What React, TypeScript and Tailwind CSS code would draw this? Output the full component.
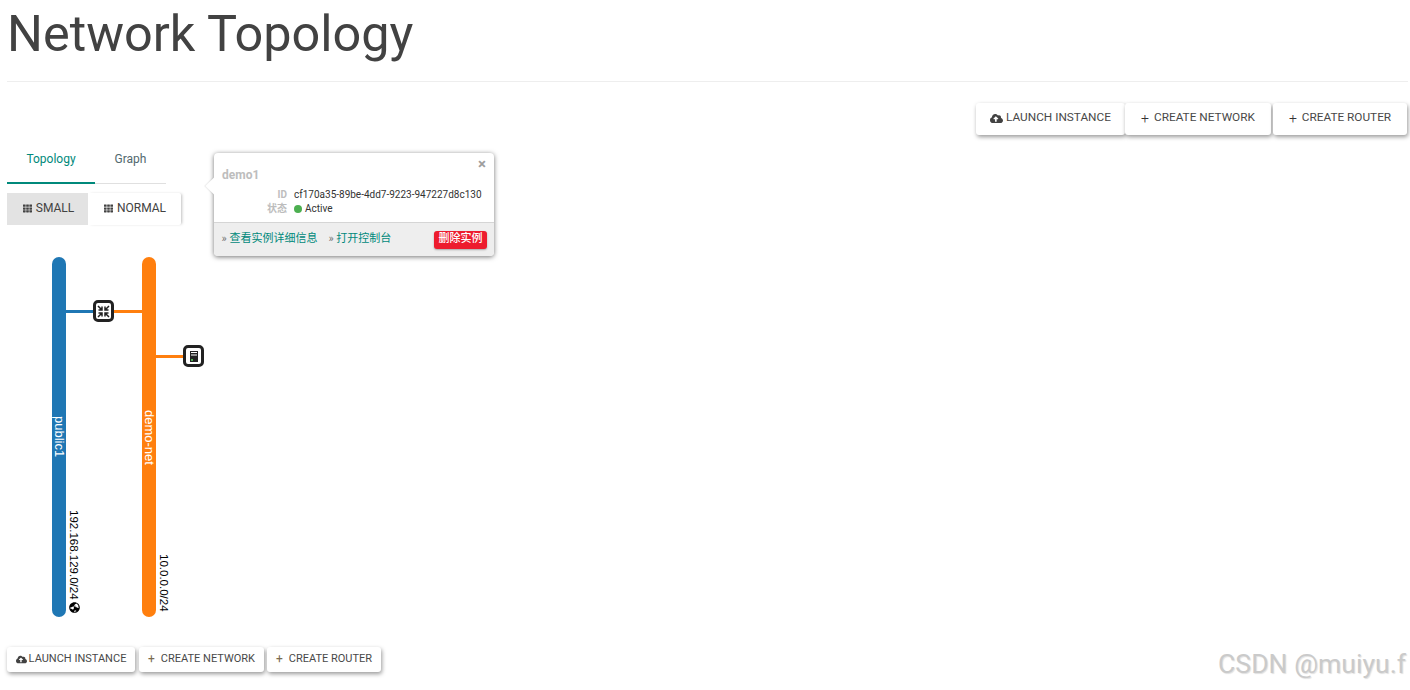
import { FaCloudUploadAlt, FaGlobeAmericas, FaTh } from "react-icons/fa";

const font = "[font-family:Roboto,'Noto_Sans_CJK_SC',sans-serif]";

function ActionButton({ label, cloud, className, small }: { label: string; cloud?: boolean; className: string; small?: boolean }) {
  return (
    <button className={`flex items-center justify-center bg-white rounded-[3px] text-[#484848] shadow-[1px_2px_4px_rgba(0,0,0,0.4)] whitespace-nowrap ${className}`}>
      {cloud ? (
        <FaCloudUploadAlt className={small ? "mr-[2px] text-[11px] text-[#424242]" : "mr-[3px] text-[13px] text-[#424242]"} />
      ) : (
        <span className={small ? "mr-[6px] text-[12px] text-[#7a6a50]" : "mr-[5px] text-[14px] font-light text-[#333333]"}>+</span>
      )}
      {label}
    </button>
  );
}

function Network({ name, cidr, left, globe, nameTop, cidrBottom, color }: { name: string; cidr: string; left: string; globe?: boolean; nameTop: string; cidrBottom: string; color: string }) {
  return (
    <div className={`absolute top-0 h-[360px] w-[14px] rounded-[7px] [font-family:'Liberation_Sans',sans-serif] ${color} ${left}`}>
      <span className={`absolute left-0 flex w-[14px] justify-center text-[13px] leading-[14px] text-white [writing-mode:vertical-rl] ${nameTop}`}>{name}</span>
      <div className={`absolute left-[15px] flex w-[14px] flex-col items-center text-[11.5px] leading-[14px] text-black ${cidrBottom}`}>
        <span className="[writing-mode:vertical-rl]">{cidr}</span>
        {globe && <FaGlobeAmericas className="mt-[2px] text-[11px] rotate-90" />}
      </div>
    </div>
  );
}

export default function App() {
  return (
    <div className={`relative h-[690px] w-[1410px] overflow-hidden bg-white pl-[7px] pr-[2px] ${font}`}>
      <div className="h-[82px] w-[1401px] border-b border-[#eeeeee]">
        <h1 className="text-[50.4px] font-normal leading-[68px] text-[#424242]">Network Topology</h1>
      </div>

      <div className="mt-[21px] flex h-[32px] justify-end pr-[1px] text-[11.8px]">
        <ActionButton cloud label="LAUNCH INSTANCE" className="w-[149px] pb-[2px]" />
        <ActionButton label="CREATE NETWORK" className="w-[146px] pb-[2px]" />
        <ActionButton label="CREATE ROUTER" className="ml-[2px] w-[134px] pb-[2px]" />
      </div>

      <div className="mt-[5px] flex h-[44px] w-[159px] border-b border-[#e0e0e0] text-[12px]">
        <div className="flex h-[44px] w-[88px] items-center justify-center border-b-2 border-[#00897b] pb-[5px] text-[#00897b]">Topology</div>
        <div className="flex w-[71px] items-center justify-center pb-[5px] text-[#52686e]">Graph</div>
      </div>

      <div className="mt-[9px] flex h-[32px] w-[174px] rounded-[2px] text-[12px] text-[#424242]">
        <div className="flex w-[81px] items-center justify-center gap-[4px] bg-[#e3e3e3] pb-[2px] pl-[2px]">
          <FaTh className="text-[9px]" /> SMALL
        </div>
        <div className="flex w-[93px] items-center justify-center gap-[4px] rounded-r-[2px] bg-white pb-[2px] pl-[1px] shadow-[2px_0_3px_-1px_rgba(0,0,0,0.25)]">
          <FaTh className="text-[9px]" /> NORMAL
        </div>
      </div>

      <div className="relative mt-[32px] h-[360px] w-[220px]">
        <Network name="public1" cidr="192.168.129.0/24" left="left-[45px]" globe nameTop="top-[159px]" cidrBottom="bottom-[4px]" color="bg-[#1f77b4]" />
        <Network name="demo-net" cidr="10.0.0.0/24" left="left-[135px]" nameTop="top-[153px]" cidrBottom="bottom-[5px]" color="bg-[#ff7f0e]" />

        <div className="absolute left-[59px] top-[53px] h-[2.5px] w-[28px] bg-[#1f77b4]" />
        <div className="absolute left-[106px] top-[53px] h-[2.5px] w-[30px] bg-[#ff7f0e]" />
        <div className="absolute left-[149px] top-[98px] h-[2.5px] w-[28px] bg-[#ff7f0e]" />

        <div className="absolute left-[86px] top-[43px] flex h-[22px] w-[21px] items-center justify-center rounded-[5px] border-[3px] border-[#222222] bg-white">
          <svg viewBox="0 0 15 15" className="h-[15px] w-[15px] shrink-0" fill="none" stroke="#222222" strokeWidth="1.5">
            <path d="M2 2 5.5 5.5M6 2.5V6H2.5M13 2 9.5 5.5M9 2.5V6h3.5M2 13 5.5 9.5M6 12.5V9H2.5M13 13 9.5 9.5M9 12.5V9h3.5" />
          </svg>
        </div>
        <div className="absolute left-[176px] top-[88px] flex h-[22px] w-[21px] items-center justify-center rounded-[5px] border-[3px] border-[#222222] bg-white">
          <svg viewBox="0 0 8 11" className="h-[11px] w-[8px] shrink-0">
            <rect x="0" y="0" width="8" height="11" fill="#222222" />
            <rect x="1" y="1" width="6" height="1" fill="#ffffff" />
            <rect x="1" y="3.5" width="6" height="1" fill="#ffffff" />
            <rect x="1" y="8" width="2" height="2" fill="#4caf50" />
          </svg>
        </div>
      </div>

      <div className="mt-[30px] flex gap-[4px] text-[11px]">
        <ActionButton small cloud label="LAUNCH INSTANCE" className="h-[25px] w-[128px] pb-[1px]" />
        <ActionButton small label="CREATE NETWORK" className="h-[25px] w-[125px] pb-[1px]" />
        <ActionButton small label="CREATE ROUTER" className="ml-[-1px] h-[25px] w-[114px] pb-[1px]" />
      </div>

      {/* popover */}
      <div className="absolute left-[214px] top-[153px] h-[103px] w-[280px] rounded-[4px] bg-white shadow-[0_1px_5px_rgba(0,0,0,0.55)]">
        <div className="absolute left-[-6px] top-[27px] h-[12px] w-[12px] rotate-45 bg-white shadow-[-1px_1px_1px_rgba(0,0,0,0.08)]" />
        <div className="relative h-[69px]">
          <span className="absolute right-[8px] top-[3px] text-[15px] font-bold leading-[16px] text-[#9e9e9e]">×</span>
          <div className="absolute left-[8px] top-[14px] text-[12px] font-bold leading-[16px] text-[#bdbdbd]">demo1</div>
          <div className="absolute left-0 top-[35px] grid grid-cols-[73px_1fr] gap-x-[7px] text-[10px] leading-[14px]">
            <span className="text-right font-bold text-[#bdbdbd]">ID</span>
            <span className="text-[#333333]">cf170a35-89be-4dd7-9223-947227d8c130</span>
            <span className="text-right font-bold text-[#bdbdbd]">状态</span>
            <span className="flex items-center text-[#333333]">
              <span className="mr-[3px] h-[8px] w-[8px] rounded-full bg-[#4caf50]" />
              Active
            </span>
          </div>
        </div>
        <div className="relative flex h-[34px] items-center rounded-b-[4px] border-t border-[#d5d5d5] bg-[#eeeeee] pl-[7.5px] text-[11px]">
          <span className="text-[#777777]">»&nbsp;</span>
          <span className="text-[#00897b]">查看实例详细信息</span>
          <span className="ml-[11px] text-[#777777]">»&nbsp;</span>
          <span className="text-[#00897b]">打开控制台</span>
          <span className="absolute right-[7px] top-[8px] flex h-[18px] w-[53px] items-center justify-center rounded-[3px] bg-[#ed1c2e] pb-[1px] font-medium text-white shadow-[0_1px_2px_rgba(0,0,0,0.3)]">删除实例</span>
        </div>
      </div>

      <div className="absolute right-[4px] top-[646px] text-[26.6px] leading-[36px] text-[#cacaca] [text-shadow:1px_1px_1px_rgba(0,0,0,0.12)]">
        CSDN @muiyu.f
      </div>
    </div>
  );
}
